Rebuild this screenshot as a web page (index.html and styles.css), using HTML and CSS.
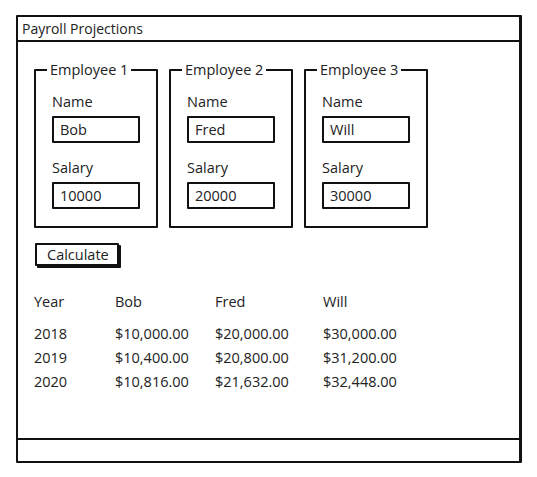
FILE: index.html
```html
<!DOCTYPE html>
<html>
<head>
<meta charset="utf-8">
<link rel="stylesheet" href="styles.css">
</head>
<body>
<div class="window">
  <div class="titlebar">Payroll Projections</div>
  <div class="content">
    <div class="groups">
      <fieldset class="group">
        <legend>Employee 1</legend>
        <div class="label">Name</div>
        <div class="field">Bob</div>
        <div class="label salary">Salary</div>
        <div class="field">10000</div>
      </fieldset>
      <fieldset class="group">
        <legend>Employee 2</legend>
        <div class="label">Name</div>
        <div class="field">Fred</div>
        <div class="label salary">Salary</div>
        <div class="field">20000</div>
      </fieldset>
      <fieldset class="group">
        <legend>Employee 3</legend>
        <div class="label">Name</div>
        <div class="field">Will</div>
        <div class="label salary">Salary</div>
        <div class="field">30000</div>
      </fieldset>
    </div>
    <button class="btn">Calculate</button>
    <div class="table">
      <div class="th">Year</div><div class="th">Bob</div><div class="th">Fred</div><div class="th">Will</div>
      <div>2018</div><div>$10,000.00</div><div>$20,000.00</div><div>$30,000.00</div>
      <div>2019</div><div>$10,400.00</div><div>$20,800.00</div><div>$31,200.00</div>
      <div>2020</div><div>$10,816.00</div><div>$21,632.00</div><div>$32,448.00</div>
    </div>
  </div>
  <div class="statusbar"></div>
</div>
</body>
</html>
```
FILE: styles.css
```css
html, body {
  margin: 0;
  padding: 0;
  background: #fff;
}
body {
  font-family: "Open Sans", Lato, sans-serif;
  font-size: 14.5px;
  color: #222;
}
.window {
  box-sizing: border-box;
  margin: 15px 0 0 16px;
  width: 506px;
  height: 448px;
  border: 2px solid #111;
  border-right-width: 3px;
  border-radius: 1px;
  display: flex;
  flex-direction: column;
}
.titlebar {
  box-sizing: border-box;
  height: 25px;
  border-bottom: 2px solid #111;
  padding-left: 4px;
  display: flex;
  align-items: center;
  line-height: 16px;
  font-size: 14px;
}
.content {
  flex: 1;
  padding: 20px 16px 0 16px;
}
.groups {
  display: flex;
  gap: 11px;
}
.group {
  box-sizing: border-box;
  width: 124px;
  margin: 0;
  padding: 16px 14px 17px 16px;
  border: 2px solid #111;
  border-radius: 1px;
  min-width: 0;
}
.group legend {
  padding: 0 3px;
  margin-left: -5px;
  line-height: 16px;
}
.label {
  line-height: 16px;
}
.label.salary {
  margin-top: 17px;
}
.field {
  box-sizing: border-box;
  margin-top: 6px;
  width: 88px;
  height: 27px;
  border: 2px solid #111;
  border-radius: 1px;
  padding-left: 6px;
  display: flex;
  align-items: center;
}
.btn {
  display: block;
  margin: 15px 0 0 1px;
  box-sizing: border-box;
  width: 84px;
  height: 23px;
  border: 2px solid #111;
  border-radius: 1px;
  box-shadow: 2px 2px 0 #111;
  background: #fff;
  font-family: "Open Sans", Lato, sans-serif;
  font-size: 14.5px;
  color: #222;
  padding: 0 0 0 10px;
  text-align: left;
}
.table {
  margin-top: 24px;
  display: grid;
  grid-template-columns: 81px 100px 108px auto;
  grid-template-rows: 32px 24px 24px 24px;
  line-height: 24px;
}
.statusbar {
  box-sizing: border-box;
  height: 23px;
  border-top: 2px solid #111;
}
```
